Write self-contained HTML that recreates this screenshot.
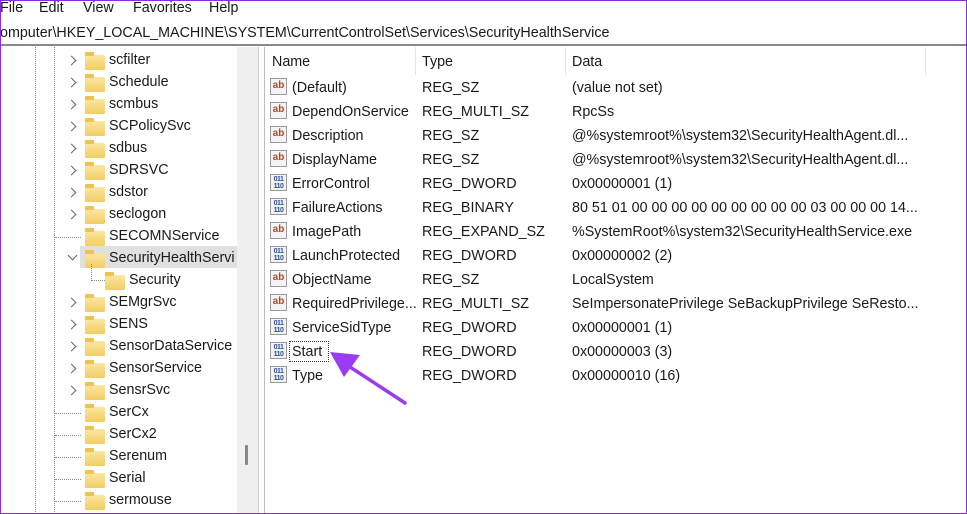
<!DOCTYPE html><html><head><style>
*{margin:0;padding:0;box-sizing:border-box}
body{width:967px;height:514px;overflow:hidden;background:#fff;font-family:"Liberation Sans",sans-serif;font-size:14.3px;color:#1a1a1a;position:relative}
.b{position:absolute}
.menu span{position:absolute;top:0;font-size:14.3px}
.t{position:absolute;white-space:nowrap}
.fold{position:absolute;width:20px;height:15px;background:linear-gradient(#fbe6a2,#f3cd62);border-radius:1px}
.fold:before{content:"";position:absolute;left:0;top:-3px;width:9px;height:4px;background:#f0c24e;border-radius:1px 1px 0 0}
.chev{position:absolute;width:7px;height:7px;border-right:1.3px solid #666;border-bottom:1.3px solid #666;transform:rotate(-45deg)}
.ic{position:absolute;width:17px;height:17px;border:1px solid #999;background:#f4f4f4;font-size:10px;font-weight:bold;text-align:center;line-height:14px}
.ab{color:#b5482a}
.bin{color:#2a4f99;font-size:7px;line-height:7px;letter-spacing:-0.5px}
</style></head><body>
<div class="b" style="left:0;top:0;width:967px;height:514px;border:1px solid #8a2be2;z-index:10;pointer-events:none"></div>
<div class="menu"><span style="left:0">File</span><span style="left:39px">Edit</span><span style="left:83px">View</span><span style="left:133px">Favorites</span><span style="left:209px">Help</span></div>
<div class="b" style="left:0;top:22px;width:967px;height:24px;border-bottom:2px solid #888"></div>
<div class="t" style="left:0;top:25px">omputer\HKEY_LOCAL_MACHINE\SYSTEM\CurrentControlSet\Services\SecurityHealthService</div>
<div class="b" style="left:237px;top:47px;width:21px;height:467px;background:#f0f0f0"></div>
<div class="b" style="left:245px;top:445px;width:3px;height:20px;background:#888;border-radius:1px"></div>
<div class="b" style="left:258px;top:47px;width:1px;height:467px;background:#ccc"></div>
<div class="b" style="left:264px;top:47px;width:1px;height:467px;background:#bbb"></div>
<div class="b" style="left:35px;top:47px;height:467px;border-left:1px dotted #888"></div>
<div class="b" style="left:54px;top:47px;height:467px;border-left:1px dotted #888"></div>
<div class="b" style="left:80px;top:246px;width:157px;height:22px;background:#e0e0e0"></div>
<div id="tree"></div>
<div class="t" style="left:272px;top:54px">Name</div><div class="t" style="left:422px;top:54px">Type</div><div class="t" style="left:572px;top:54px">Data</div>
<div class="b" style="left:415px;top:47px;width:1px;height:28px;background:#e5e5e5"></div>
<div class="b" style="left:565px;top:47px;width:1px;height:28px;background:#e5e5e5"></div>
<div class="b" style="left:925px;top:47px;width:1px;height:28px;background:#e5e5e5"></div>
<div id="vals"></div>
<div class="b" style="left:289px;top:341px;width:40px;height:21px;border:1px dotted #333"></div>
<svg class="b" style="left:0;top:0" width="967" height="514"><line x1="405" y1="403" x2="347" y2="365" stroke="#9a3cf0" stroke-width="3.5" stroke-linecap="round"/><polygon points="330,352 360,355 344,377" fill="#9a3cf0"/></svg>
<script>
var tr=[["scfilter",1],["Schedule",1],["scmbus",1],["SCPolicySvc",1],["sdbus",1],["SDRSVC",1],["sdstor",1],["seclogon",1],["SECOMNService",0],["SecurityHealthServi",2],["Security",3],["SEMgrSvc",1],["SENS",1],["SensorDataService",1],["SensorService",1],["SensrSvc",1],["SerCx",0],["SerCx2",0],["Serenum",0],["Serial",0],["sermouse",0]];
var h="";tr.forEach(function(r,i){var y=49+i*22,x=85;if(r[1]==3)x=105;
if(r[1]==1)h+='<div class="chev" style="left:68px;top:'+(y+8)+'px"></div>';
if(r[1]==2)h+='<div class="chev" style="left:69px;top:'+(y+5)+'px;transform:rotate(45deg)"></div>';
if(r[1]==0)h+='<div class="b" style="left:55px;top:'+(y+12)+'px;width:26px;border-top:1px dotted #888"></div>';
if(r[1]==3)h+='<div class="b" style="left:91px;top:'+(y-5)+'px;height:17px;width:14px;border-left:1px dotted #888;border-bottom:1px dotted #888"></div>';
h+='<div class="fold" style="left:'+x+'px;top:'+(y+6)+'px"></div><div class="t" style="left:'+(x+24)+'px;top:'+(y+3)+'px">'+r[0]+'</div>';});
document.getElementById("tree").innerHTML=h;
var v=[["(Default)","REG_SZ","(value not set)",0],["DependOnService","REG_MULTI_SZ","RpcSs",0],["Description","REG_SZ","@%systemroot%\\system32\\SecurityHealthAgent.dl...",0],["DisplayName","REG_SZ","@%systemroot%\\system32\\SecurityHealthAgent.dl...",0],["ErrorControl","REG_DWORD","0x00000001 (1)",1],["FailureActions","REG_BINARY","80 51 01 00 00 00 00 00 00 00 00 00 03 00 00 00 14...",1],["ImagePath","REG_EXPAND_SZ","%SystemRoot%\\system32\\SecurityHealthService.exe",0],["LaunchProtected","REG_DWORD","0x00000002 (2)",1],["ObjectName","REG_SZ","LocalSystem",0],["RequiredPrivilege...","REG_MULTI_SZ","SeImpersonatePrivilege SeBackupPrivilege SeResto...",0],["ServiceSidType","REG_DWORD","0x00000001 (1)",1],["Start","REG_DWORD","0x00000003 (3)",1],["Type","REG_DWORD","0x00000010 (16)",1]];
h="";v.forEach(function(r,i){var y=77+i*24;
h+=r[3]?'<div class="ic bin" style="left:270px;top:'+(y+1)+'px;padding-top:1px">011<br>110</div>':'<div class="ic ab" style="left:270px;top:'+(y+1)+'px">ab</div>';
h+='<div class="t" style="left:292px;top:'+(y+3)+'px">'+r[0]+'</div><div class="t" style="left:422px;top:'+(y+3)+'px">'+r[1]+'</div><div class="t" style="left:572px;top:'+(y+3)+'px">'+r[2]+'</div>';});
document.getElementById("vals").innerHTML=h;
</script>
</body></html>
